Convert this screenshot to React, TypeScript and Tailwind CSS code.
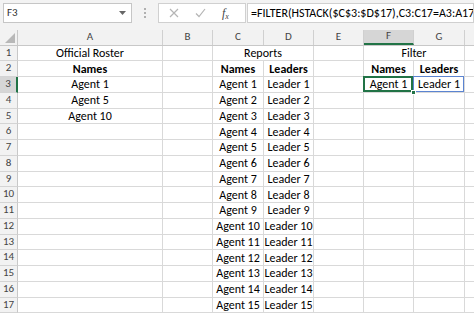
import React from 'react';

// Excel-like sheet: roster, reports and FILTER(HSTACK(...)) spill result

const FONT = { fontFamily: 'Carlito, Calibri, "Liberation Sans", Arial, sans-serif' };

const COLS = [
  { key: 'A', w: 'w-[145px]' },
  { key: 'B', w: 'w-[50px]' },
  { key: 'C', w: 'w-[51px]' },
  { key: 'D', w: 'w-[50px]' },
  { key: 'E', w: 'w-[50px]' },
  { key: 'F', w: 'w-[50px]' },
  { key: 'G', w: 'w-[51px]' },
];

const roster: Record<number, string> = { 3: 'Agent 1', 4: 'Agent 5', 5: 'Agent 10' };

function valueAt(row: number, col: string): { text: string; bold?: boolean } {
  if (row === 2) {
    if (col === 'A' || col === 'C' || col === 'F') return { text: 'Names', bold: true };
    if (col === 'D' || col === 'G') return { text: 'Leaders', bold: true };
    return { text: '' };
  }
  if (col === 'A') return { text: roster[row] ?? '' };
  if (col === 'C') return { text: `Agent ${row - 2}` };
  if (col === 'D') return { text: `Leader ${row - 2}` };
  if (row === 3 && col === 'F') return { text: 'Agent 1' };
  if (row === 3 && col === 'G') return { text: 'Leader 1' };
  return { text: '' };
}

function RowHead({ n, active }: { n: number; active?: boolean }) {
  return (
    <div
      className={`w-[18px] shrink-0 flex items-center justify-center text-[11px] text-[#444] border-b border-[#d4d4d4] ${
        active ? 'bg-[#d6d6d6] border-r-2 border-r-[#217346]' : 'bg-[#f2f2f2] border-r border-r-[#c8c8c8]'
      }`}
    >
      {n}
    </div>
  );
}

function Cell({ w, children, bold, extra }: { w: string; children?: React.ReactNode; bold?: boolean; extra?: React.ReactNode }) {
  return (
    <div
      className={`${w} shrink-0 relative flex items-center justify-center border-r border-b border-[#d9d9d9] text-[12px] text-black whitespace-nowrap ${
        bold ? 'font-bold' : ''
      }`}
    >
      {children}
      {extra}
    </div>
  );
}

export default function App() {
  const rows = Array.from({ length: 17 }, (_, i) => i + 1);
  return (
    <div className="w-[474px] h-[315px] overflow-hidden bg-white select-none" style={FONT}>
      {/* Formula bar */}
      <div className="h-[30px] bg-[#f3f3f3] flex items-start pt-[3px] pl-[3px]">
        <div className="w-[129px] h-[20px] bg-white border border-[#c6c6c6] flex items-center justify-between px-[3px] text-[11px] text-[#333]">
          <span>F3</span>
          <svg width="7" height="4" viewBox="0 0 7 4" className="mr-[2px]">
            <path d="M0 0h7L3.5 4z" fill="#666" />
          </svg>
        </div>
        <div className="w-[26px] h-[20px] flex flex-col items-center justify-center gap-[2px]">
          <span className="w-[2px] h-[2px] bg-[#b0b0b0]" />
          <span className="w-[2px] h-[2px] bg-[#b0b0b0]" />
          <span className="w-[2px] h-[2px] bg-[#b0b0b0]" />
        </div>
        <div className="w-[88px] h-[20px] bg-white border border-[#d0d0d0] flex items-center">
          <svg width="10" height="10" viewBox="0 0 10 10" className="ml-[10px]">
            <path d="M1 1l8 8M9 1L1 9" stroke="#b5b5b5" strokeWidth="1.2" />
          </svg>
          <svg width="11" height="10" viewBox="0 0 11 10" className="ml-[16px]">
            <path d="M1 5.5l3 3L10 1" stroke="#b5b5b5" strokeWidth="1.2" fill="none" />
          </svg>
          <span className="ml-[16px] text-[12px] italic text-[#444]" style={{ fontFamily: '"Liberation Serif", serif' }}>
            f<sub className="text-[8px]">x</sub>
          </span>
        </div>
        <div className="flex-1 h-[20px] ml-[1px] bg-white border border-[#d0d0d0] flex items-center pl-[3px] overflow-hidden whitespace-nowrap text-[12px] text-black">
          =FILTER(HSTACK($C$3:$D$17),C3:C17=A3:A17<span className="text-[#c0732a]">)</span>
        </div>
      </div>

      {/* Column headers */}
      <div className="flex h-[15.5px] bg-[#f2f2f2] border-b border-[#c8c8c8]">
        <div className="w-[18px] shrink-0 border-r border-[#c8c8c8] relative">
          <svg width="10" height="10" viewBox="0 0 10 10" className="absolute right-[2px] bottom-[2px]">
            <path d="M10 0v10H0z" fill="#b8b8b8" />
          </svg>
        </div>
        {COLS.map((c) => (
          <div
            key={c.key}
            className={`${c.w} shrink-0 flex items-center justify-center text-[11px] text-[#444] border-r border-[#d0d0d0] ${
              c.key === 'F' ? 'bg-[#d6d6d6] border-b-2 border-b-[#217346]' : ''
            }`}
          >
            {c.key}
          </div>
        ))}
        <div className="flex-1" />
      </div>

      {/* Rows */}
      {rows.map((r) => (
        <div key={r} className="flex h-[15.75px]">
          <RowHead n={r} active={r === 3} />
          {r === 1 ? (
            <>
              <Cell w="w-[145px]">Official Roster</Cell>
              <Cell w="w-[50px]" />
              <Cell w="w-[101px]">Reports</Cell>
              <Cell w="w-[50px]" />
              <Cell w="w-[101px]">Filter</Cell>
            </>
          ) : (
            COLS.map((c) => {
              const v = valueAt(r, c.key);
              let extra: React.ReactNode = null;
              if (r === 3 && c.key === 'F') {
                extra = (
                  <>
                    <div className="absolute -left-[1px] -top-[1px] right-0 bottom-0 border-2 border-[#217346] pointer-events-none" />
                    <div className="absolute -right-[3px] -bottom-[3px] w-[5px] h-[5px] bg-[#217346] border border-white z-10" />
                  </>
                );
              }
              if (r === 3 && c.key === 'G') {
                extra = <div className="absolute -left-[1px] -top-[1px] right-0 bottom-0 border border-[#5b84d1] pointer-events-none" />;
              }
              return (
                <Cell key={c.key} w={c.w} bold={v.bold} extra={extra}>
                  {v.text}
                </Cell>
              );
            })
          )}
          <div className="flex-1 border-b border-[#d9d9d9]" />
        </div>
      ))}
    </div>
  );
}
